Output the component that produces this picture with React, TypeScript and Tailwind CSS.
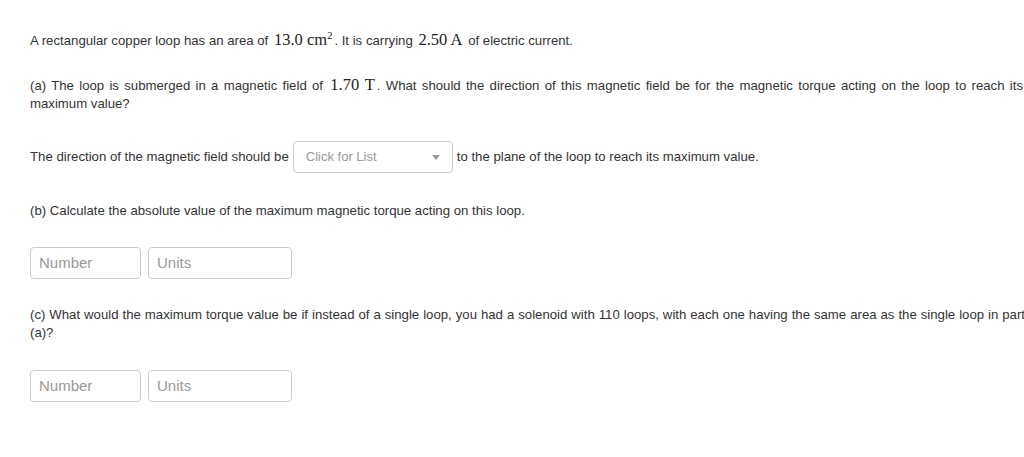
import React from 'react';

const sans = "font-['Liberation_Sans',Arial,sans-serif]";
const serif = "font-['Liberation_Serif','Times_New_Roman',serif]";

function M({ children }: { children: React.ReactNode }) {
  return <span className={`${serif} mx-[2px] text-[16.5px] leading-[18px] text-[#222]`}>{children}</span>;
}

function AnswerInputs() {
  return (
    <div className="flex gap-[7px]">
      <div className="w-[111px] h-[32px] border border-[#ccc] rounded-[4px] flex items-center pl-[8px] text-[15px] text-[#999]">
        Number
      </div>
      <div className="w-[144px] h-[32px] border border-[#ccc] rounded-[4px] flex items-center pl-[8px] text-[15px] text-[#999]">
        Units
      </div>
    </div>
  );
}

export default function App() {
  return (
    <div className={`w-full h-[457px] overflow-hidden bg-white ${sans} text-[13.2px] leading-[18px] text-[#333]`}>
      <div className="ml-[30px] w-[993px] pt-[31px]">
        <p className="h-[18px]">
          A rectangular copper loop has an area of{' '}
          <M>
            13.0 cm<span className="relative -top-[6px] text-[10.5px] leading-[0]">2</span>
          </M>
          . It is carrying <M>2.50 A</M> of electric current.
        </p>

        {/* (a) first line justified to the right edge */}
        <div className="mt-[27px]">
          <p className="text-justify [text-align-last:justify] whitespace-nowrap">
            (a) The loop is submerged in a magnetic field of <M>1.70 T</M>. What should the direction of this magnetic
            field be for the magnetic torque acting on the loop to reach its
          </p>
          <p>maximum value?</p>
        </div>

        {/* dropdown sentence */}
        <div className="mt-[28px] flex items-center">
          <span>The direction of the magnetic field should be</span>
          <div className="ml-[4px] w-[160px] h-[32px] border border-[#ccc] rounded-[4px] flex items-center justify-between pl-[12px] pr-[12px] text-[13px] text-[#999]">
            <span>Click for List</span>
            <svg width="8" height="5" viewBox="0 0 8 5" className="mt-[1px]">
              <path d="M0 0H8L4 5Z" fill="#999" />
            </svg>
          </div>
          <span className="ml-[4px]">to the plane of the loop to reach its maximum value.</span>
        </div>

        <p className="mt-[29px]">(b) Calculate the absolute value of the maximum magnetic torque acting on this loop.</p>

        <div className="mt-[27px]">
          <AnswerInputs />
        </div>

        <div className="mt-[27px]">
          <p className="text-justify [text-align-last:justify] whitespace-nowrap w-[995px]">
            (c) What would the maximum torque value be if instead of a single loop, you had a solenoid with 110 loops, with
            each one having the same area as the single loop in part
          </p>
          <p>(a)?</p>
        </div>

        <div className="mt-[28px]">
          <AnswerInputs />
        </div>
      </div>
    </div>
  );
}
